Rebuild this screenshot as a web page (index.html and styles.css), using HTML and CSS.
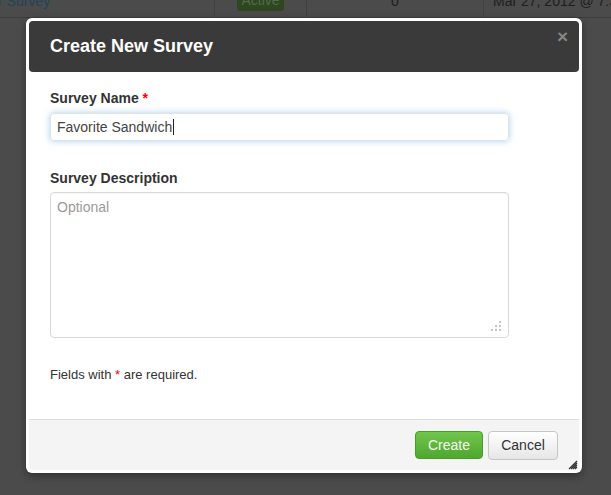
FILE: index.html
```html
<!DOCTYPE html>
<html>
<head>
<meta charset="utf-8">
<title>Create New Survey</title>
<link rel="stylesheet" href="styles.css">
</head>
<body>
<div class="page">
  <div class="row">
    <div class="cell cell-name"><span class="link">Customer Survey</span></div>
    <div class="cell cell-status"><span class="badge">Active</span></div>
    <div class="cell cell-count">0</div>
    <div class="cell cell-date">Mar 27, 2012 @ 7:30 PM</div>
  </div>
</div>

<div class="modal">
  <div class="modal-header">
    <h3 class="modal-title">Create New Survey</h3>
    <span class="close">&times;</span>
  </div>
  <div class="modal-body">
    <label class="label">Survey Name <span class="req">*</span></label>
    <div class="input"><span class="input-text">Favorite Sandwich</span><span class="caret"></span></div>
    <label class="label label-desc">Survey Description</label>
    <div class="textarea-wrap">
      <textarea class="textarea" placeholder="Optional"></textarea>
      <svg class="grip" width="12" height="12" viewBox="0 0 12 12">
        <rect x="9" y="0" width="2" height="2" fill="#c4c4c4"/>
        <rect x="5" y="4" width="2" height="2" fill="#c4c4c4"/>
        <rect x="9" y="4" width="2" height="2" fill="#c4c4c4"/>
        <rect x="1" y="8" width="2" height="2" fill="#c4c4c4"/>
        <rect x="5" y="8" width="2" height="2" fill="#c4c4c4"/>
        <rect x="9" y="8" width="2" height="2" fill="#c4c4c4"/>
      </svg>
    </div>
    <p class="note">Fields with <span class="req">*</span> are required.</p>
  </div>
  <div class="modal-footer">
    <button class="btn btn-create">Create</button>
    <button class="btn btn-cancel">Cancel</button>
  </div>
  <svg class="modal-grip" width="10" height="10" viewBox="0 0 10 10">
    <path d="M9 1 L1 9 M9 3 L3 9 M9 5 L5 9 M9 7 L7 9" stroke="#333" stroke-width="1.2" fill="none"/>
  </svg>
</div>
</body>
</html>
```

FILE: styles.css
```css
html, body {
  margin: 0;
  padding: 0;
}
body {
  width: 611px;
  height: 495px;
  overflow: hidden;
  background: #4b4b4b;
  font-family: "Liberation Sans", Arial, sans-serif;
  position: relative;
}
.page {
  overflow: hidden;
}
.row {
  display: flex;
  margin-top: -8px;
  height: 25px;
  border-bottom: 1px solid #3d3d3d;
  font-size: 14px;
  line-height: 14px;
}
.cell {
  box-sizing: border-box;
  border-right: 1px solid #424242;
  padding-top: 2px;
  white-space: nowrap;
  overflow: hidden;
}
.cell-name {
  width: 215px;
  padding-left: 0;
}
.link {
  display: inline-block;
  margin-left: -58px;
  color: #20455a;
}
.cell-status {
  width: 92px;
  padding-left: 22px;
  padding-top: 0;
}
.badge {
  display: inline-block;
  width: 47px;
  height: 19px;
  line-height: 16px;
  background: #2e4720;
  color: #526c46;
  border-radius: 3px;
  text-align: center;
  font-size: 14px;
}
.cell-count {
  width: 177px;
  text-align: center;
  color: #1e1e1e;
}
.cell-date {
  flex: 1;
  padding-left: 9px;
  color: #1e1e1e;
  border-right: none;
}

.modal {
  position: absolute;
  left: 26px;
  top: 18px;
  width: 556px;
  height: 455px;
  box-sizing: border-box;
  padding: 3px;
  background: #fff;
  border-radius: 6px;
  box-shadow: 0 3px 8px rgba(0, 0, 0, 0.35);
  display: flex;
  flex-direction: column;
}
.modal-header {
  height: 51px;
  background: #3a3a3a;
  border-radius: 4px;
  padding-left: 21px;
  display: flex;
  align-items: center;
  position: relative;
}
.modal-title {
  margin: 0;
  font-size: 18px;
  line-height: 51px;
  font-weight: bold;
  color: #fff;
}
.close {
  position: absolute;
  right: 11px;
  top: 6px;
  font-size: 19px;
  font-weight: bold;
  line-height: 20px;
  color: #858585;
}
.modal-body {
  flex: 1;
  padding: 16px 21px 0 21px;
  display: flex;
  flex-direction: column;
  align-items: flex-start;
}
.label {
  display: block;
  font-size: 14px;
  line-height: 20px;
  font-weight: bold;
  color: #333;
}
.req {
  color: #f00;
}
.input {
  margin-top: 5px;
  width: 459px;
  height: 28px;
  box-sizing: border-box;
  border: 1px solid #e3e3e3;
  border-radius: 4px;
  box-shadow: 0 0 6px rgba(82, 168, 236, 0.55);
  padding: 0 6px;
  display: flex;
  align-items: center;
  font-size: 14px;
  color: #444;
}
.caret {
  display: inline-block;
  width: 1px;
  height: 16px;
  background: #222;
  margin-left: 1px;
}
.label-desc {
  margin-top: 27px;
}
.textarea-wrap {
  margin-top: 4px;
  position: relative;
  width: 459px;
  height: 146px;
}
.textarea {
  display: block;
  width: 459px;
  height: 146px;
  box-sizing: border-box;
  margin: 0;
  border: 1px solid #d9d9d9;
  border-radius: 4px;
  padding: 4px 6px;
  resize: none;
  outline: none;
  font-family: "Liberation Sans", Arial, sans-serif;
  font-size: 14px;
  line-height: 20px;
  color: #444;
  box-shadow: inset 0 1px 1px rgba(0, 0, 0, 0.04);
}
.textarea::placeholder {
  color: #9a9a9a;
}
.grip {
  position: absolute;
  right: 7px;
  bottom: 5px;
}
.note {
  margin: 29px 0 0 0;
  font-size: 13px;
  line-height: 16px;
  color: #333;
}
.modal-footer {
  height: 50px;
  border-top: 1px solid #dcdcdc;
  background: #f4f4f4;
  border-radius: 0 0 4px 4px;
  display: flex;
  align-items: center;
  justify-content: flex-end;
  padding-right: 21px;
  gap: 5px;
}
.btn {
  height: 29px;
  box-sizing: border-box;
  border-radius: 4px;
  font-family: "Liberation Sans", Arial, sans-serif;
  font-size: 14px;
  padding: 0;
  cursor: pointer;
}
.btn-create {
  width: 68px;
  height: 28px;
  color: #f4fbf0;
  background: linear-gradient(#71c64d, #4fa72f);
  border: 1px solid #4a9b2b;
}
.btn-cancel {
  width: 70px;
  color: #333;
  background: linear-gradient(#ffffff, #e6e6e6);
  border: 1px solid #c6c6c6;
}
.modal-grip {
  position: absolute;
  right: 4px;
  bottom: 3px;
}
```
